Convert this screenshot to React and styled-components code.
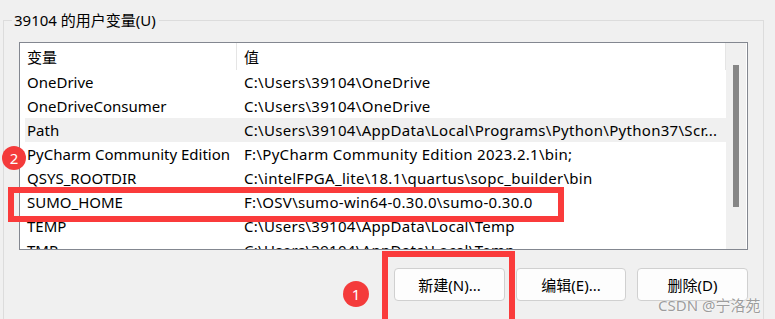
import styled, { createGlobalStyle } from 'styled-components'

const Global = createGlobalStyle`
  html, body {
    margin: 0;
    height: 319px;
    overflow: hidden;
    background: #f0f0f0;
  }
  body {
    font-family: "Noto Sans", "Noto Sans CJK SC", sans-serif;
    font-size: 15px;
    color: #000;
  }
`;

const Page = styled.div`
  position: relative;
  width: 775px;
  height: 319px;
  padding: 10px 11px 0 3px;
  box-sizing: border-box;
  overflow: hidden;
`;

const Group = styled.fieldset`
  margin: 0;
  padding: 0 15px 0 15px;
  border: 1px solid #dcdcdc;
  height: 330px;
  box-sizing: border-box;
`;

const Legend = styled.legend`
  margin-left: -7px;
  padding: 0 3px 0 2px;
  line-height: 20px;
  font-size: 15px;
`;

const List = styled.div`
  margin-top: 12px;
  width: 729px;
  height: 208px;
  box-sizing: border-box;
  border: 1px solid #838790;
  background: #fff;
  display: flex;
  overflow: hidden;
`;

const Content = styled.div`
  flex: 1;
  padding-left: 5px;
  overflow: hidden;
`;

const HeaderRow = styled.div`
  display: flex;
  height: 27px;
  align-items: center;
`;

const HeaderCell = styled.div`
  height: 100%;
  display: flex;
  align-items: center;
  box-sizing: border-box;
  width: ${(p) => p.w || 'auto'};
  flex: ${(p) => (p.w ? 'none' : 1)};
  padding-left: ${(p) => p.pl}px;
  border-right: 1px solid #e5e5e5;
`;

const Row = styled.div`
  display: flex;
  height: 24px;
  align-items: center;
  background: ${(p) => (p.hl ? '#f0f0f0' : 'transparent')};
`;

const Cell = styled.div`
  box-sizing: border-box;
  width: ${(p) => p.w || 'auto'};
  flex: ${(p) => (p.w ? 'none' : 1)};
  padding-left: ${(p) => p.pl}px;
  white-space: nowrap;
  overflow: hidden;
  letter-spacing: ${(p) => p.ls || 0}px;
`;

const ScrollTrack = styled.div`
  width: 20px;
  margin-right: 1px;
  background: #f0f0f0;
  display: flex;
  justify-content: center;
  padding-top: 22px;
  box-sizing: border-box;
`;

const Thumb = styled.div`
  width: 6px;
  height: 142px;
  background: #868686;
`;

const Buttons = styled.div`
  display: flex;
  justify-content: flex-end;
  gap: 11px;
  width: 729px;
  margin-top: 18px;
`;

const Button = styled.button`
  width: ${(p) => p.w}px;
  height: 33px;
  background: #fdfdfd;
  border: 1px solid #d0d0d0;
  border-radius: 4px;
  font-family: "Noto Sans", "Noto Sans CJK SC", sans-serif;
  font-size: 15px;
  color: #000;
  padding: 0;
`;

const RedBox = styled.div`
  position: absolute;
  left: ${(p) => p.x}px;
  top: ${(p) => p.y}px;
  width: ${(p) => p.w}px;
  height: ${(p) => p.h}px;
  border: 6px solid #fa3b3b;
  box-sizing: border-box;
`;

const Badge = styled.div`
  position: absolute;
  left: ${(p) => p.x}px;
  top: ${(p) => p.y}px;
  width: ${(p) => p.d}px;
  height: ${(p) => p.d}px;
  border-radius: 50%;
  background: #f43b3b;
  color: #fff;
  font-size: 15px;
  display: flex;
  align-items: center;
  justify-content: center;
`;

const Watermark = styled.div`
  position: absolute;
  left: 658px;
  top: 294px;
  font-size: 15px;
  color: rgba(140, 140, 140, 0.85);
  text-shadow: 0 0 2px #fff;
  white-space: nowrap;
`;

const rows = [
  ['OneDrive', 'C:\\Users\\39104\\OneDrive'],
  ['OneDriveConsumer', 'C:\\Users\\39104\\OneDrive'],
  ['Path', 'C:\\Users\\39104\\AppData\\Local\\Programs\\Python\\Python37\\Scr...', true],
  ['PyCharm Community Edition', 'F:\\PyCharm Community Edition 2023.2.1\\bin;'],
  ['QSYS_ROOTDIR', 'C:\\intelFPGA_lite\\18.1\\quartus\\sopc_builder\\bin'],
  ['SUMO_HOME', 'F:\\OSV\\sumo-win64-0.30.0\\sumo-0.30.0'],
  ['TEMP', 'C:\\Users\\39104\\AppData\\Local\\Temp'],
  ['TMP', 'C:\\Users\\39104\\AppData\\Local\\Temp'],
];

export default function App() {
  return (
    <Page>
      <Global />
      <Group>
        <Legend>39104 的用户变量(U)</Legend>
        <List>
          <Content>
            <HeaderRow>
              <HeaderCell w="212px" pl={2}>变量</HeaderCell>
              <HeaderCell pl={7}>值</HeaderCell>
            </HeaderRow>
            {rows.map(([name, value, hl]) => (
              <Row key={name} hl={hl}>
                <Cell w="212px" pl={2}>{name}</Cell>
                <Cell pl={7} ls={0.3}>{value}</Cell>
              </Row>
            ))}
          </Content>
          <ScrollTrack>
            <Thumb />
          </ScrollTrack>
        </List>
        <Buttons>
          <Button w={111}>新建(N)...</Button>
          <Button w={110}>编辑(E)...</Button>
          <Button w={111}>删除(D)</Button>
        </Buttons>
      </Group>
      <RedBox x={8} y={187} w={556} h={35} />
      <RedBox x={382} y={251} w={133} h={75} />
      <Badge x={2} y={146} d={24}>2</Badge>
      <Badge x={343} y={281} d={26}>1</Badge>
      <Watermark>CSDN @宁洛苑</Watermark>
    </Page>
  )
}
